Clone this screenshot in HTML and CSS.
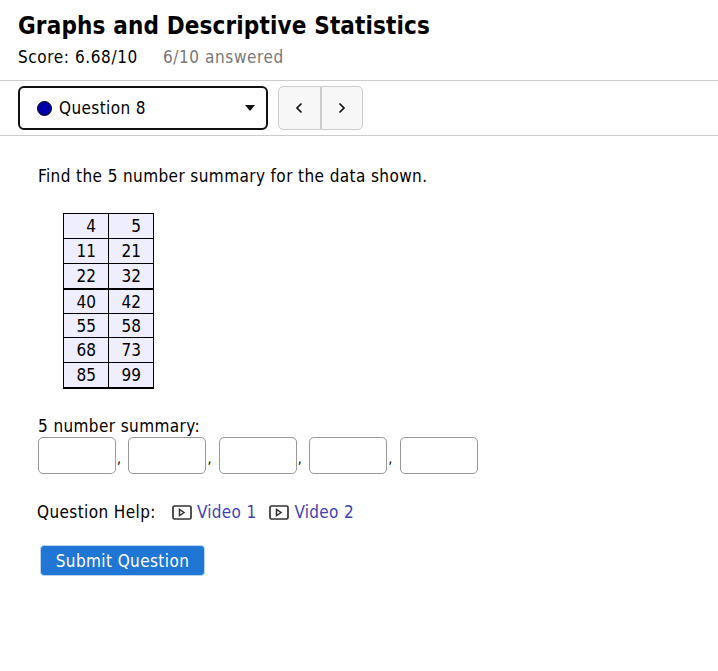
FILE: index.html
```html
<!DOCTYPE html>
<html lang="en">
<head>
  <meta charset="UTF-8" />
  <title>Graphs and Descriptive Statistics</title>
  <link rel="stylesheet" href="styles.css">
</head>
<body>
  <header class="head">
    <h1>Graphs and Descriptive Statistics</h1>
    <div class="score">
      <span>Score: 6.68/10</span>
      <span class="answered">6/10 answered</span>
    </div>
  </header>

  <nav class="nav">
    <div class="picker">
      <span class="dot"></span>
      <span class="picker-label">Question 8</span>
      <span class="caret"></span>
    </div>
    <div class="pager">
      <button class="page-btn" aria-label="Previous">
        <svg width="8" height="12" viewBox="0 0 8 12"><path d="M6.500 1.500 2 6l4.500 4.500" fill="none" stroke="#111" stroke-width="1.700"/></svg>
      </button>
      <button class="page-btn" aria-label="Next">
        <svg width="8" height="12" viewBox="0 0 8 12"><path d="M1.500 1.500 6 6l-4.500 4.500" fill="none" stroke="#111" stroke-width="1.700"/></svg>
      </button>
    </div>
  </nav>

  <main class="question">
    <p class="prompt">Find the 5 number summary for the data shown.</p>

    <table class="data">
      <tr><td>4</td><td>5</td></tr>
      <tr><td>11</td><td>21</td></tr>
      <tr><td>22</td><td>32</td></tr>
      <tr class="split"><td>40</td><td>42</td></tr>
      <tr class="short"><td>55</td><td>58</td></tr>
      <tr><td>68</td><td>73</td></tr>
      <tr class="last"><td>85</td><td>99</td></tr>
    </table>

    <div class="summary-label">5 number summary:</div>
    <div class="answers">
      <input type="text" /><span class="comma">,</span>
      <input type="text" /><span class="comma">,</span>
      <input type="text" /><span class="comma">,</span>
      <input type="text" /><span class="comma">,</span>
      <input type="text" />
    </div>

    <div class="help">
      <span class="help-label">Question Help:</span>
      <a class="video" href="#">
        <svg width="20" height="15" viewBox="0 0 20 15"><rect x="1" y="1" width="18" height="13" rx="1.500" fill="none" stroke="#333" stroke-width="1.700"/><path d="M7.500 4.500v6l4.500-3z" fill="none" stroke="#333" stroke-width="1.500"/></svg>
        Video 1
      </a>
      <a class="video" href="#">
        <svg width="20" height="15" viewBox="0 0 20 15"><rect x="1" y="1" width="18" height="13" rx="1.500" fill="none" stroke="#333" stroke-width="1.700"/><path d="M7.500 4.500v6l4.500-3z" fill="none" stroke="#333" stroke-width="1.500"/></svg>
        Video 2
      </a>
    </div>

    <button class="submit">Submit Question</button>
  </main>
</body>
</html>
```

FILE: styles.css
```css
body {
  margin: 0;
  background-color: #fff;
  color: #000;
  font-family: "DejaVu Sans Condensed", "DejaVu Sans", sans-serif;
  font-size: 17px;
  letter-spacing: 0.4px;
}

.head {
  padding: 9px 18px 0;
  height: 80px;
  box-sizing: border-box;
}

h1 {
  margin: 0;
  font-size: 24px;
  line-height: 34px;
  font-weight: 700;
  letter-spacing: 0.15px;
}

.score {
  display: flex;
  gap: 25px;
  margin-top: 2px;
  line-height: 24px;
  letter-spacing: 0.6px;
}

.answered {
  color: #777;
}

.nav {
  display: flex;
  gap: 10px;
  height: 56px;
  box-sizing: border-box;
  padding: 5px 18px;
  border-top: 1px solid #ccc;
  border-bottom: 1px solid #ccc;
}

.picker {
  display: flex;
  align-items: center;
  width: 250px;
  box-sizing: border-box;
  padding: 0 11px 0 17px;
  border: 2px solid #111;
  border-radius: 6px;
}

.dot {
  width: 13px;
  height: 13px;
  border-radius: 50%;
  background-color: #00a;
  border: 1px solid #000;
  margin-right: 7px;
}

.picker-label {
  flex: 1;
}

.caret {
  width: 0;
  height: 0;
  border-left: 5px solid transparent;
  border-right: 5px solid transparent;
  border-top: 6px solid #111;
}

.pager {
  display: flex;
}

.page-btn {
  width: 43px;
  padding: 0 1px 0 0;
  background-color: #f7f7f7;
  border: 1px solid #ccc;
  border-radius: 5px 0 0 5px;
  display: flex;
  align-items: center;
  justify-content: center;
}

.page-btn + .page-btn {
  width: 42px;
  padding: 0;
  border-left-width: 1px;
  border-radius: 0 5px 5px 0;
}

.question {
  padding: 28px 20px 0;
}

.prompt {
  margin: 0 18px;
  line-height: 24px;
}

.data {
  margin: 25px 0 0 43px;
  border-collapse: collapse;
}

.data td {
  width: 32px;
  height: 24px;
  padding: 0 12px 0 0;
  border: 1px solid #000;
  background-color: #eef;
  text-align: right;
  line-height: 20px;
  letter-spacing: 0;
}

.split td {
  height: 23px;
  border-top-width: 2px;
}

.short td {
  height: 23px;
}

.last td {
  height: 24px;
  border-bottom-width: 2px;
}

.summary-label {
  margin: 26px 0 0 18px;
  line-height: 22px;
}

.answers {
  display: flex;
  align-items: center;
  margin-left: 18px;
}

.answers input {
  width: 78px;
  height: 37px;
  box-sizing: border-box;
  border: 1px solid #999;
  border-radius: 5px;
}

.comma {
  width: 12.400px;
  padding-top: 5px;
  box-sizing: border-box;
  padding-left: 1px;
  line-height: 24px;
  font-size: 14px;
}

.help {
  display: flex;
  align-items: center;
  margin: 26px 0 0 17px;
  line-height: 24px;
}

.help-label {
  margin-right: 16px;
}

.video {
  display: flex;
  align-items: center;
  gap: 5px;
  margin-right: 13px;
  color: #3f3fb5;
  text-decoration: none;
  letter-spacing: 0.3px;
}

.submit {
  display: block;
  margin: 21px 0 0 20px;
  width: 165px;
  height: 31px;
  padding: 0;
  background-color: #1f76d4;
  color: #fff;
  border: 1px solid #bcd3ea;
  border-radius: 4px;
  font-family: inherit;
  font-size: 17px;
  letter-spacing: 0.4px;
}
```
